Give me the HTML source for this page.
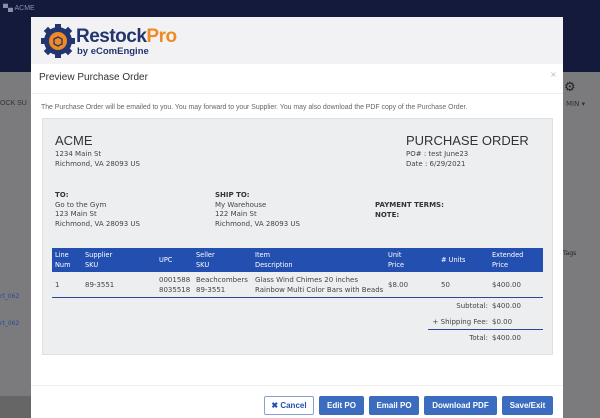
<!DOCTYPE html>
<html><head><style>
*{margin:0;padding:0;box-sizing:border-box}
body{width:600px;height:418px;overflow:hidden;position:relative;background:#7b7b7d;font-family:"DejaVu Sans","Liberation Sans",sans-serif}
.a{position:absolute}
.t{font-size:7px;color:#444;line-height:9.5px}
.b{font-weight:bold;color:#333}
.th{color:#fff;font-size:6.6px;line-height:9.5px}
.btn{position:absolute;top:396px;height:19px;background:#3b6cbf;color:#fff;font-family:"Liberation Sans",sans-serif;font-weight:bold;font-size:8px;line-height:19px;text-align:center;border-radius:2px}
</style></head><body>
<div class="a" style="left:0;top:0;width:600px;height:72px;background:#141a3b"></div>
<div class="a" style="left:3px;top:5px;font-size:7px;color:#8890aa;font-family:'Liberation Sans',sans-serif">▀▄ ACME</div>
<div class="a" style="left:0;top:100px;font-size:7px;color:#333;font-family:'Liberation Sans',sans-serif">OCK SU</div>
<div class="a" style="left:564px;top:80px;font-size:13px;color:#222">⚙</div>
<div class="a" style="left:566px;top:100px;font-size:7px;color:#333">MIN ▾</div>
<div class="a" style="left:0;top:396px;width:31px;height:22px;background:#666"></div>
<div class="a" style="left:563px;top:250px;font-size:6px;color:#222">Tags</div>
<div class="a" style="left:0;top:293px;font-size:6px;color:#2a4aa0">rt_062</div>
<div class="a" style="left:0;top:320px;font-size:6px;color:#2a4aa0">rt_062</div>

<div class="a" style="left:31px;top:17px;width:532px;height:401px;background:#fff"></div>
<div class="a" style="left:31px;top:17px;width:532px;height:47px;background:#f2f2f4"></div>
<svg class="a" style="left:41px;top:24px" width="34" height="34" viewBox="0 0 34 34"><circle cx="17" cy="17" r="14" fill="#23356e"/><g fill="#23356e"><rect x="14" y="0" width="6" height="6"/><rect x="14" y="28" width="6" height="6"/><rect x="0" y="14" width="6" height="6"/><rect x="28" y="14" width="6" height="6"/><rect x="4" y="4" width="6" height="6" transform="rotate(45 7 7)"/><rect x="24" y="4" width="6" height="6" transform="rotate(45 27 7)"/><rect x="4" y="24" width="6" height="6" transform="rotate(45 7 27)"/><rect x="24" y="24" width="6" height="6" transform="rotate(45 27 27)"/></g><circle cx="17" cy="17" r="9" fill="#f08a24"/><path d="M13 15l4-2 4 2v5l-4 2-4-2z" fill="none" stroke="#23356e" stroke-width="1.3"/></svg>
<div class="a" style="left:76px;top:26px;font-family:'Liberation Sans',sans-serif;font-weight:bold;font-size:19px;color:#23356e;letter-spacing:-0.5px">Restock<span style="color:#f08a24">Pro</span></div>
<div class="a" style="left:77px;top:46px;font-family:'Liberation Sans',sans-serif;font-weight:bold;font-size:9.5px;color:#23356e">by eComEngine</div>
<div class="a" style="left:39px;top:72px;font-family:'Liberation Sans',sans-serif;font-size:10px;color:#333">Preview Purchase Order</div>
<div class="a" style="left:550px;top:70px;font-size:8px;color:#bbb">×</div>
<div class="a" style="left:31px;top:93px;width:532px;height:1px;background:#eee"></div>
<div class="a" style="left:41px;top:104px;font-family:'Liberation Sans',sans-serif;font-size:6.9px;color:#666;white-space:nowrap">The Purchase Order will be emailed to you. You may forward to your Supplier. You may also download the PDF copy of the Purchase Order.</div>

<div class="a" style="left:42px;top:118px;width:511px;height:237px;background:#edeef0;border:1px solid #e0e0e2"></div>
<div class="a" style="left:55px;top:133px;font-family:'Liberation Sans',sans-serif;font-size:13px;color:#333">ACME</div>
<div class="a t" style="left:55px;top:150px">1234 Main St<br>Richmond, VA 28093 US</div>
<div class="a" style="left:406px;top:133px;font-family:'Liberation Sans',sans-serif;font-size:13px;color:#333">PURCHASE ORDER</div>
<div class="a t" style="left:406px;top:150px">PO# : test June23<br>Date : 6/29/2021</div>
<div class="a t" style="left:55px;top:191px"><span class="b">TO:</span><br>Go to the Gym<br>123 Main St<br>Richmond, VA 28093 US</div>
<div class="a t" style="left:215px;top:191px"><span class="b">SHIP TO:</span><br>My Warehouse<br>122 Main St<br>Richmond, VA 28093 US</div>
<div class="a t" style="left:375px;top:201px"><span class="b">PAYMENT TERMS:<br>NOTE:</span></div>

<div class="a" style="left:52px;top:248px;width:491px;height:24px;background:#2350b0"></div>
<div class="a th" style="left:55px;top:251px">Line<br>Num</div>
<div class="a th" style="left:85px;top:251px">Supplier<br>SKU</div>
<div class="a th" style="left:159px;top:256px">UPC</div>
<div class="a th" style="left:196px;top:251px">Seller<br>SKU</div>
<div class="a th" style="left:255px;top:251px">Item<br>Description</div>
<div class="a th" style="left:388px;top:251px">Unit<br>Price</div>
<div class="a th" style="left:441px;top:256px"># Units</div>
<div class="a th" style="left:492px;top:251px">Extended<br>Price</div>
<div class="a t" style="left:55px;top:281px">1</div>
<div class="a t" style="left:85px;top:281px">89-3551</div>
<div class="a t" style="left:159px;top:276px">0001588<br>8035518</div>
<div class="a t" style="left:196px;top:276px">Beachcombers<br>89-3551</div>
<div class="a t" style="left:255px;top:276px">Glass Wind Chimes 20 inches<br>Rainbow Multi Color Bars with Beads</div>
<div class="a t" style="left:388px;top:281px">$8.00</div>
<div class="a t" style="left:441px;top:281px">50</div>
<div class="a t" style="left:492px;top:281px">$400.00</div>
<div class="a" style="left:52px;top:297px;width:491px;height:1px;background:#2a4a90"></div>
<div class="a t" style="left:400px;top:302px;width:88px;text-align:right">Subtotal:</div>
<div class="a t" style="left:492px;top:302px">$400.00</div>
<div class="a t" style="left:400px;top:318px;width:88px;text-align:right">+ Shipping Fee:</div>
<div class="a t" style="left:492px;top:318px">$0.00</div>
<div class="a" style="left:428px;top:329px;width:115px;height:1px;background:#2a4a90"></div>
<div class="a t" style="left:400px;top:334px;width:88px;text-align:right">Total:</div>
<div class="a t" style="left:492px;top:334px">$400.00</div>

<div class="a" style="left:31px;top:385px;width:532px;height:1px;background:#eee"></div>
<div class="btn" style="left:264px;width:50px;background:#fff;color:#2350b0;border:1px solid #8aa0cc;line-height:17px">✖ Cancel</div>
<div class="btn" style="left:319px;width:45px">Edit PO</div>
<div class="btn" style="left:369px;width:50px">Email PO</div>
<div class="btn" style="left:424px;width:73px">Download PDF</div>
<div class="btn" style="left:502px;width:51px">Save/Exit</div>
</body></html>
